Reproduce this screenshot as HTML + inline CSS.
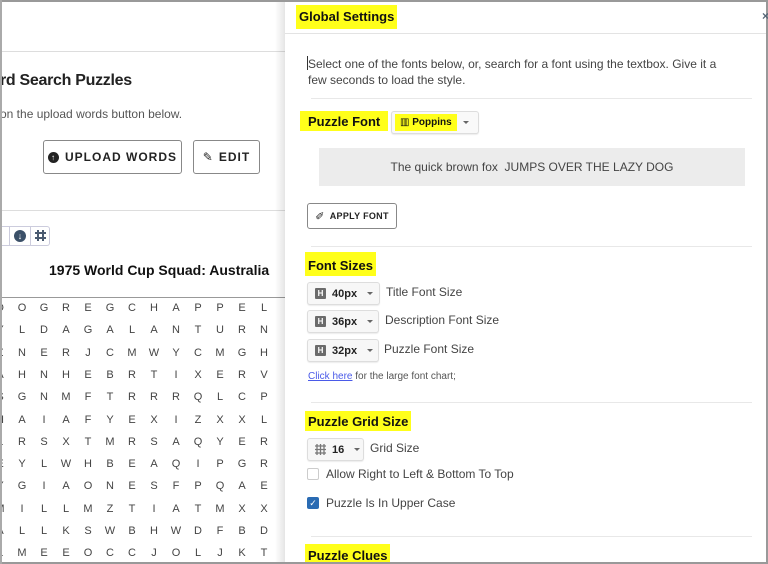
<!DOCTYPE html>
<html><head><meta charset="utf-8"><style>
*{box-sizing:border-box;margin:0;padding:0}
body{width:768px;height:564px;overflow:hidden;background:#fff;font-family:"Liberation Sans","DejaVu Sans",sans-serif;position:relative;color:#333}
.a{position:absolute;white-space:nowrap}
.hl{background:#ffff1a;color:#111;font-weight:bold}
.btn{position:absolute;border:1px solid #888;border-radius:3px;background:#fff;font-size:12px;font-weight:bold;letter-spacing:1px;color:#222;display:flex;align-items:center;justify-content:center}
.dd{position:absolute;border:1px solid #ddd;border-radius:3px;background:#f7f7f7;box-shadow:0 1px 1px rgba(0,0,0,.08);font-size:11px;font-weight:bold;color:#222;display:flex;align-items:center;padding-left:7px}
.hi{display:inline-block;width:11px;height:11px;background:#6b6b6b;color:#fff;font-size:8px;line-height:11px;text-align:center;margin-right:6px;border-radius:1px}
.car{display:inline-block;width:0;height:0;border-left:3px solid transparent;border-right:3px solid transparent;border-top:3px solid #666;margin-left:10px}
.lbl{position:absolute;font-size:12px;color:#444}
.sep{position:absolute;left:311px;width:441px;height:1px;background:#e8e8e8}
.g{position:absolute;font-size:11px;color:#444;width:14px;text-align:center}
</style></head><body>
<div class="a" style="left:0;top:51px;width:285px;height:1px;background:#ddd"></div>
<div class="a" style="left:0;top:72px;font-size:16px;font-weight:bold;color:#222;letter-spacing:-0.3px">rd Search Puzzles</div>
<div class="a" style="left:0;top:107px;font-size:12px;color:#555">on the upload words button below.</div>
<div class="btn" style="left:43px;top:140px;width:139px;height:34px"><span style="display:inline-block;width:11px;height:11px;border-radius:50%;background:#222;color:#fff;font-size:8px;line-height:11px;text-align:center;margin-right:6px">↑</span>UPLOAD WORDS</div>
<div class="btn" style="left:193px;top:140px;width:67px;height:34px"><span style="font-size:12px;margin-right:5px">✎</span>EDIT</div>
<div class="a" style="left:0;top:210px;width:285px;height:1px;background:#ddd"></div>
<div class="a" style="left:0;top:226px;width:50px;height:20px;border:1px solid #ccd;border-left:none;border-radius:0 3px 3px 0"></div>
<div class="a" style="left:9px;top:226px;width:1px;height:20px;background:#ccd"></div>
<div class="a" style="left:30px;top:226px;width:1px;height:20px;background:#ccd"></div>
<div class="a" style="left:14px;top:230px;width:12px;height:12px;border-radius:50%;background:#3b5068;color:#fff;font-size:9px;line-height:12px;text-align:center">↓</div>
<svg class="a" style="left:34px;top:229px" width="13" height="13" viewBox="0 0 13 13"><path d="M4 1v11M9 1v11M1 4h11M1 9h11" stroke="#4a5a70" stroke-width="2"/></svg>
<div class="a" style="left:49px;top:262px;font-size:14px;font-weight:bold;color:#111">1975 World Cup Squad: Australia</div>
<div class="a" style="left:0;top:297px;width:285px;height:1px;background:#999"></div>
<div id="grid"></div>
<div class="a" style="left:275px;top:0;width:12px;height:564px;background:linear-gradient(to right,rgba(0,0,0,0),rgba(0,0,0,.12))"></div>
<div class="a" style="left:285px;top:0;width:483px;height:564px;background:#fff;border-right:2px solid #999"></div>
<div class="a hl" style="left:296px;top:5px;height:24px;padding:4px 3px;font-size:13px">Global Settings</div>
<div class="a" style="left:762px;top:9px;font-size:12px;color:#567;font-weight:bold">×</div>
<div class="a" style="left:285px;top:33px;width:481px;height:1px;background:#e3e3e3"></div>
<div class="a" style="left:307px;top:56px;width:1px;height:14px;background:#333"></div>
<div class="a" style="left:308px;top:56px;font-size:12px;color:#444;line-height:16px;white-space:normal;width:428px">Select one of the fonts below, or, search for a font using the textbox. Give it a few seconds to load the style.</div>
<div class="sep" style="top:98px"></div>
<div class="a hl" style="left:300px;top:111px;height:20px;padding:3px 8px;font-size:13px">Puzzle Font</div>
<div class="dd" style="left:391px;top:111px;width:88px;height:23px;background:#f9f9f9"><span class="hl" style="padding:3px 5px;font-size:10px;margin-left:-4px">▥ Poppins</span><span class="car" style="margin-left:6px"></span></div>
<div class="a" style="left:319px;top:148px;width:426px;height:38px;background:#ececec;font-size:12px;color:#444;text-align:center;line-height:38px">The quick brown fox &nbsp;JUMPS OVER THE LAZY DOG</div>
<div class="btn" style="left:307px;top:203px;width:90px;height:26px;font-size:9px;letter-spacing:0.3px"><span style="margin-right:5px;font-size:11px">✐</span>APPLY FONT</div>
<div class="sep" style="top:246px"></div>
<div class="a hl" style="left:305px;top:252px;height:24px;padding:6px 3px 2px;font-size:13px">Font Sizes</div>
<div class="dd" style="left:307px;top:282px;width:73px;height:23px"><span class="hi">H</span>40px<span class="car"></span></div>
<div class="lbl" style="left:386px;top:285px">Title Font Size</div>
<div class="dd" style="left:307px;top:310px;width:72px;height:23px"><span class="hi">H</span>36px<span class="car"></span></div>
<div class="lbl" style="left:385px;top:313px">Description Font Size</div>
<div class="dd" style="left:307px;top:339px;width:72px;height:23px"><span class="hi">H</span>32px<span class="car"></span></div>
<div class="lbl" style="left:384px;top:342px">Puzzle Font Size</div>
<div class="a" style="left:308px;top:371px;font-size:10px;color:#555"><span style="color:#4a5ae8;text-decoration:underline">Click here</span> for the large font chart;</div>
<div class="sep" style="top:402px"></div>
<div class="a hl" style="left:305px;top:411px;height:20px;padding:3px;font-size:13px">Puzzle Grid Size</div>
<div class="dd" style="left:307px;top:438px;width:57px;height:23px"><svg width="11" height="11" viewBox="0 0 11 11" style="margin-right:6px"><path d="M2 0v11M5.5 0v11M9 0v11M0 2h11M0 5.5h11M0 9h11" stroke="#777" stroke-width="1.3"/></svg>16<span class="car"></span></div>
<div class="lbl" style="left:370px;top:441px">Grid Size</div>
<div class="a" style="left:307px;top:468px;width:12px;height:12px;border:1px solid #ccc;border-radius:2px"></div>
<div class="lbl" style="left:326px;top:467px">Allow Right to Left &amp; Bottom To Top</div>
<div class="a" style="left:307px;top:497px;width:12px;height:12px;background:#2a6bb3;border-radius:2px;color:#fff;font-size:9px;line-height:12px;text-align:center">✓</div>
<div class="lbl" style="left:326px;top:496px">Puzzle Is In Upper Case</div>
<div class="sep" style="top:536px"></div>
<div class="a hl" style="left:305px;top:544px;height:20px;padding:4px 3px;font-size:13px">Puzzle Clues</div>
<div class="a" style="left:0;top:0;width:768px;height:2px;background:#999"></div>
<div class="a" style="left:0;top:562px;width:768px;height:2px;background:#999"></div>
<div class="a" style="left:0;top:0;width:2px;height:564px;background:#aaa"></div>
<script>
var rows=["DOGREGCHAPPEL","YLDAGALANTURN","ZNERJCMWYCMGH","AHNHEBRTIXERV","SGNMFTRRRQLCP","HAIAFYEXIZXXL","LRSXTMRSAQYER","EYLWHBEAQIPGR","YGIAONESFPQAE","MILLMZTIATMXX","ALLKSWBHWDFBD","LMEEOCCJOLJKT"];
var h="";for(var r=0;r<rows.length;r++)for(var c=0;c<13;c++){h+='<div class="g" style="left:'+(c*22-7)+'px;top:'+(302+r*22.3)+'px">'+rows[r][c]+'</div>';}
document.getElementById("grid").innerHTML=h;
</script>
</body></html>
